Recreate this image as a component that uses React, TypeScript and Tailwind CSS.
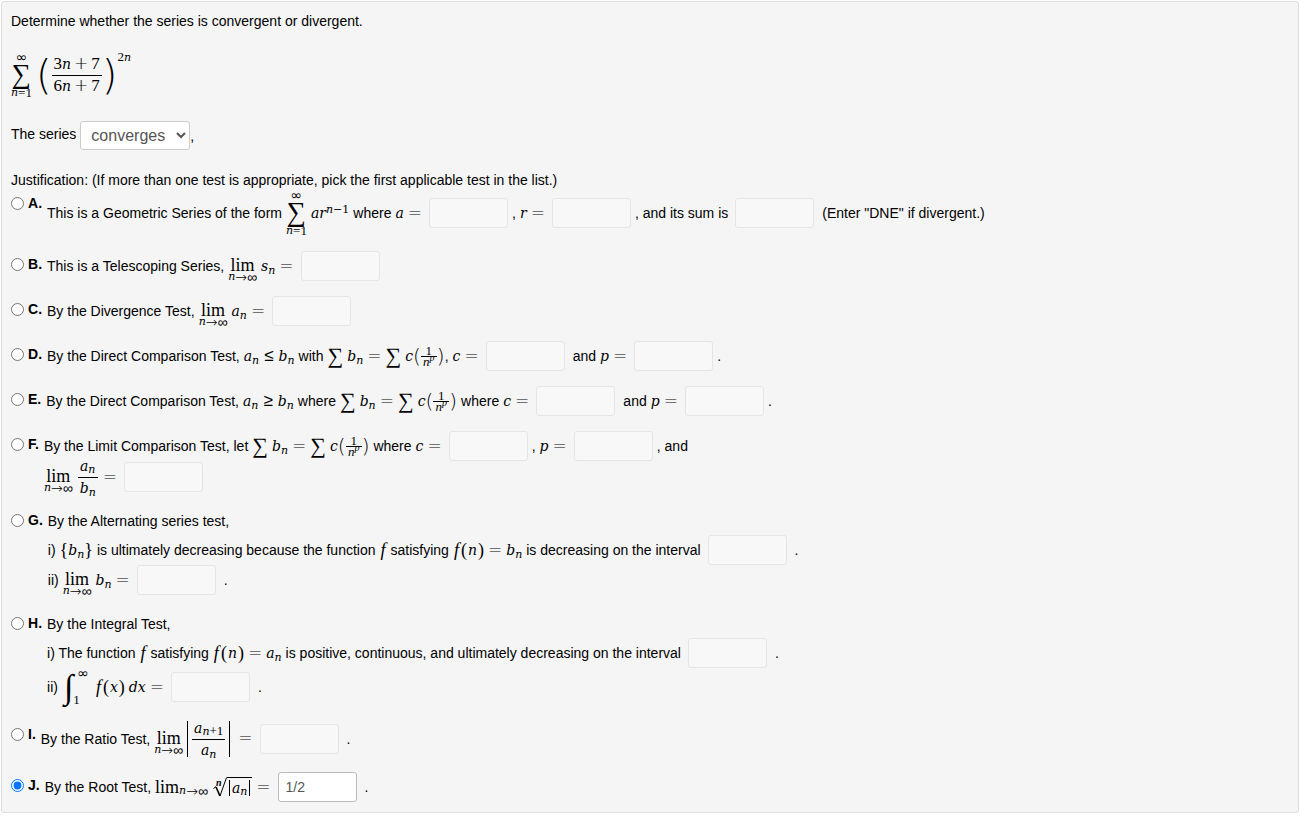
import { useState, type ReactNode } from 'react';

const Var = ({ children, sub }: { children: ReactNode; sub?: ReactNode }) => (
    <span className="font-['DejaVu_Serif',serif] text-[14px] leading-4 italic whitespace-nowrap">
        {children}
        {sub && <sub className="text-[11px]">{sub}</sub>}
    </span>
);

const Num = ({ children }: { children: ReactNode }) => (
    <span className="font-['Liberation_Serif',serif] text-[17px] leading-4">{children}</span>
);

const Op = ({ children }: { children: ReactNode }) => (
    <span className="font-['DejaVu_Sans',sans-serif] text-[17px] leading-4 font-extralight">{children}</span>
);

const Approach = () => (
    <span className="flex items-center leading-2">
        <i className="font-['DejaVu_Serif',serif] text-[11px]">n</i>
        <span className="font-['DejaVu_Sans',sans-serif] text-[14px] font-extralight">→∞</span>
    </span>
);

const Limit = () => (
    <span className="-my-2 flex flex-col items-center pt-[6px] font-['Liberation_Serif',serif]">
        <span className="text-[18px] leading-4">lim</span>
        <Approach />
    </span>
);

const BigSum = () => (
    <span className="flex flex-col items-center font-['Liberation_Serif',serif]">
        <span className="font-['DejaVu_Sans',sans-serif] text-[14px] leading-[10px]">∞</span>
        <span className="text-[27px] leading-[25px]">∑</span>
        <span className="flex items-center text-[13px] leading-[11px]">
            <i className="font-['DejaVu_Serif',serif] text-[11px]">n</i>=1
        </span>
    </span>
);

const Sum = () => <span className="font-['Liberation_Serif',serif] text-[22px] leading-4">∑</span>;

const Fraction = ({ top, bottom }: { top: ReactNode; bottom: ReactNode }) => (
    <span className="flex flex-col">
        <span className="flex h-[22px] items-center justify-center border-b border-black px-[2px] pb-[2px]">{top}</span>
        <span className="flex h-5 items-center justify-center px-[2px]">{bottom}</span>
    </span>
);

const Fn = () => <i className="px-px font-['Liberation_Serif',serif] text-[18px] leading-4">f</i>;

const Call = ({ arg }: { arg: string }) => (
    <span className="flex items-center gap-px font-['Liberation_Serif',serif] text-[18px] leading-4">
        <Fn />(<Var>{arg}</Var>)
    </span>
);

// c(1/n^p), the general term of a p-series
const PTerm = () => (
    <span className="flex items-center">
        <Var>c</Var>
        <span className="font-['DejaVu_Sans',sans-serif] text-[20px] leading-5 font-extralight">(</span>
        <span className="flex w-4 flex-col text-center font-['Liberation_Serif',serif] text-[13px] leading-[10px]">
            <span className="border-b border-black">1</span>
            <i>n<sup className="text-[10px]">p</sup></i>
        </span>
        <span className="font-['DejaVu_Sans',sans-serif] text-[20px] leading-5 font-extralight">)</span>
    </span>
);

const Answer = ({ label, value }: { label: string; value?: string }) => (
    <input
        type="text"
        aria-label={label}
        defaultValue={value}
        className="ml-[3px] h-[30px] w-[79px] rounded-[3px] border border-[#bbb] bg-white px-[7px] text-[14px] text-[#555] disabled:border-[#e5e5e5] disabled:bg-[#f8f8f8]"
    />
);

const Line = ({ children }: { children: ReactNode }) => (
    <div className="flex min-h-[30px] items-center gap-1 whitespace-nowrap">{children}</div>
);

interface OptionProps {
    letter: string;
    choice: string;
    onChoose: (letter: string) => void;
    children: ReactNode;
}

const Option = ({ letter, choice, onChoose, children }: OptionProps) => (
    <div className="flex items-start gap-[5px]">
        <label className="flex h-[26px] items-center gap-1 font-bold">
            <input
                type="radio"
                name="test"
                checked={choice === letter}
                onChange={() => onChoose(letter)}
                className="h-[13px] w-[13px]"
            />
            {letter}.
        </label>
        <fieldset disabled={choice !== letter}>{children}</fieldset>
    </div>
);

export default function App() {
    const [choice, setChoice] = useState('J');
    const pick = { choice, onChoose: setChoice };

    return (
        <main className="m-px rounded-[3px] border border-[#ddd] bg-[#f5f5f5] px-[9px] pt-[9px] pb-[10px] font-['Liberation_Sans',Arial,sans-serif] text-[14px] leading-5 text-black">
            <p>Determine whether the series is convergent or divergent.</p>

            <div className="mt-5 flex h-12 items-center">
                <BigSum />
                <span className="ml-1 font-['DejaVu_Sans',sans-serif] text-[40px] leading-10 font-extralight">(</span>
                <Fraction
                    top={<><Num>3</Num><Var>n</Var><span className="mx-[3px]"><Op>+</Op></span><Num>7</Num></>}
                    bottom={<><Num>6</Num><Var>n</Var><span className="mx-[3px]"><Op>+</Op></span><Num>7</Num></>}
                />
                <span className="font-['DejaVu_Sans',sans-serif] text-[40px] leading-10 font-extralight">)</span>
                <span className="self-start font-['Liberation_Serif',serif] text-[13px] leading-3">
                    2<i className="font-['DejaVu_Serif',serif] text-[11px]">n</i>
                </span>
            </div>

            <div className="mt-[22px] flex items-center">
                <label htmlFor="verdict" className="pb-1">The series</label>
                <select
                    id="verdict"
                    defaultValue="converges"
                    className="ml-1 h-[29px] w-[110px] rounded-[3px] border border-[#ccc] bg-white px-[6px] text-[16px] text-[#555]"
                >
                    <option>converges</option>
                    <option>diverges</option>
                </select>
                <span>,</span>
            </div>

            <p className="mt-5">
                Justification: (If more than one test is appropriate, pick the first applicable test in the list.)
            </p>

            <div className="flex flex-col gap-[15px]">
                <Option letter="A" {...pick}>
                    <Line>
                        <span>This is a Geometric Series of the form</span>
                        <BigSum />
                        <Var>ar<sup className="text-[11px]">n−<span className="not-italic">1</span></sup></Var>
                        <span>where</span>
                        <Var>a</Var><Op>=</Op>
                        <Answer label="a" />
                        <span>,</span>
                        <Var>r</Var><Op>=</Op>
                        <Answer label="r" />
                        <span>, and its sum is</span>
                        <Answer label="Sum" />
                        <span className="ml-1">(Enter "DNE" if divergent.)</span>
                    </Line>
                </Option>

                <Option letter="B" {...pick}>
                    <Line>
                        <span>This is a Telescoping Series,</span>
                        <Limit />
                        <Var sub="n">s</Var><Op>=</Op>
                        <Answer label="Limit of s" />
                    </Line>
                </Option>

                <Option letter="C" {...pick}>
                    <Line>
                        <span>By the Divergence Test,</span>
                        <Limit />
                        <Var sub="n">a</Var><Op>=</Op>
                        <Answer label="Limit of a" />
                    </Line>
                </Option>

                <Option letter="D" {...pick}>
                    <Line>
                        <span>By the Direct Comparison Test,</span>
                        <Var sub="n">a</Var><span className="px-px"><Op>≤</Op></span><Var sub="n">b</Var>
                        <span>with</span>
                        <Sum /><Var sub="n">b</Var><Op>=</Op><Sum />
                        <span className="flex items-center"><PTerm />,</span>
                        <Var>c</Var><Op>=</Op>
                        <Answer label="c" />
                        <span className="ml-1">and</span>
                        <Var>p</Var><Op>=</Op>
                        <Answer label="p" />
                        <span>.</span>
                    </Line>
                </Option>

                <Option letter="E" {...pick}>
                    <Line>
                        <span>By the Direct Comparison Test,</span>
                        <Var sub="n">a</Var><span className="px-px"><Op>≥</Op></span><Var sub="n">b</Var>
                        <span>where</span>
                        <Sum /><Var sub="n">b</Var><Op>=</Op><Sum /><PTerm />
                        <span>where</span>
                        <Var>c</Var><Op>=</Op>
                        <Answer label="c" />
                        <span className="ml-1">and</span>
                        <Var>p</Var><Op>=</Op>
                        <Answer label="p" />
                        <span>.</span>
                    </Line>
                </Option>

                <Option letter="F" {...pick}>
                    <div className="flex flex-col gap-px">
                        <Line>
                            <span>By the Limit Comparison Test, let</span>
                            <Sum /><Var sub="n">b</Var><Op>=</Op><Sum /><PTerm />
                            <span>where</span>
                            <Var>c</Var><Op>=</Op>
                            <Answer label="c" />
                            <span>,</span>
                            <Var>p</Var><Op>=</Op>
                            <Answer label="p" />
                            <span>, and</span>
                        </Line>
                        <Line>
                            <Limit />
                            <span className="-my-2 mx-px">
                                <Fraction top={<Var sub="n">a</Var>} bottom={<Var sub="n">b</Var>} />
                            </span>
                            <Op>=</Op>
                            <Answer label="Limit of the quotient" />
                        </Line>
                    </div>
                </Option>

                <Option letter="G" {...pick}>
                    <p className="pt-1 pb-1">By the Alternating series test,</p>
                    <Line>
                        <span>i)</span>
                        <span className="flex items-center font-['Liberation_Serif',serif] text-[18px]">
                            {'{'}<Var sub="n">b</Var>{'}'}
                        </span>
                        <span>is ultimately decreasing because the function</span>
                        <Fn />
                        <span>satisfying</span>
                        <Call arg="n" />
                        <Op>=</Op>
                        <Var sub="n">b</Var>
                        <span>is decreasing on the interval</span>
                        <Answer label="Interval" />
                        <span className="ml-1">.</span>
                    </Line>
                    <Line>
                        <span>ii)</span>
                        <Limit />
                        <Var sub="n">b</Var><Op>=</Op>
                        <Answer label="Limit of b" />
                        <span className="ml-1">.</span>
                    </Line>
                </Option>

                <Option letter="H" {...pick}>
                    <p className="pt-1 pb-1">By the Integral Test,</p>
                    <Line>
                        <span>i) The function</span>
                        <Fn />
                        <span>satisfying</span>
                        <Call arg="n" />
                        <Op>=</Op>
                        <Var sub="n">a</Var>
                        <span>is positive, continuous, and ultimately decreasing on the interval</span>
                        <Answer label="Interval" />
                        <span className="ml-1">.</span>
                    </Line>
                    <Line>
                        <span>ii)</span>
                        <span className="flex h-[38px] px-[2px] font-['Liberation_Serif',serif]">
                            <span className="text-[34px] leading-[38px] italic">∫</span>
                            <span className="flex flex-col justify-between">
                                <span className="ml-1 font-['DejaVu_Sans',sans-serif] text-[14px] leading-[10px]">∞</span>
                                <span className="text-[13px] leading-3">1</span>
                            </span>
                        </span>
                        <Call arg="x" />
                        <Var>dx</Var>
                        <Op>=</Op>
                        <Answer label="Value of the integral" />
                        <span className="ml-1">.</span>
                    </Line>
                </Option>

                <Option letter="I" {...pick}>
                    <Line>
                        <span>By the Ratio Test,</span>
                        <Limit />
                        <span className="flex h-9 items-center border-x border-black px-1">
                            <Fraction
                                top={<Var sub={<>n<span className="font-['Liberation_Serif',serif] text-[13px] not-italic">+1</span></>}>a</Var>}
                                bottom={<Var sub="n">a</Var>}
                            />
                        </span>
                        <span className="ml-1"><Op>=</Op></span>
                        <Answer label="Limit of the ratio" />
                        <span className="ml-1">.</span>
                    </Line>
                </Option>

                <Option letter="J" {...pick}>
                    <Line>
                        <span>By the Root Test,</span>
                        <span className="flex items-center font-['Liberation_Serif',serif] text-[18px]">
                            lim<span className="pt-2"><Approach /></span>
                        </span>
                        <span className="relative ml-px flex items-center">
                            <i className="absolute top-[2px] left-[3px] font-['Liberation_Serif',serif] text-[10px] leading-2 font-bold">n</i>
                            <svg viewBox="0 0 14 20" className="h-5 w-[14px]" fill="none" stroke="black">
                                <path d="M0.5 11.5L3 9.5" />
                                <path d="M3 10L7 19" strokeWidth="1.6" />
                                <path d="M7 19L13.5 0.5" />
                            </svg>
                            <span className="flex h-5 items-center border-t border-black px-[2px]">
                                <span className="flex h-4 items-center border-x border-black px-[2px]"><Var sub="n">a</Var></span>
                            </span>
                        </span>
                        <Op>=</Op>
                        <Answer label="Limit of the root" value="1/2" />
                        <span className="ml-1">.</span>
                    </Line>
                </Option>
            </div>
        </main>
    );
}
